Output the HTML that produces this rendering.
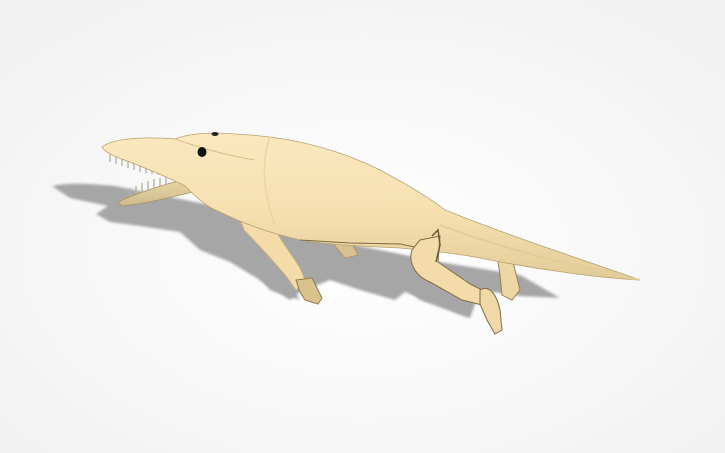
<!DOCTYPE html>
<html><head><style>
html,body{margin:0;padding:0;width:725px;height:453px;overflow:hidden;background:#f8f8f8}
</style></head><body>
<svg width="725" height="453" viewBox="0 0 725 453" xmlns="http://www.w3.org/2000/svg">
<defs>
<radialGradient id="bg" cx="50%" cy="55%" r="70%">
<stop offset="0" stop-color="#ffffff"/><stop offset="1" stop-color="#f1f1f1"/>
</radialGradient>
<linearGradient id="body" x1="0" y1="0" x2="0" y2="1">
<stop offset="0" stop-color="#fbe8bf"/><stop offset="0.55" stop-color="#f6e0b0"/><stop offset="1" stop-color="#e2cb98"/>
</linearGradient>
<linearGradient id="jaw" x1="0" y1="0" x2="0" y2="1">
<stop offset="0" stop-color="#eedaa8"/><stop offset="1" stop-color="#cdb98a"/>
</linearGradient>
<filter id="bl"><feGaussianBlur stdDeviation="1.2"/></filter>
</defs>
<rect width="725" height="453" fill="url(#bg)"/>
<!-- shadow -->
<path filter="url(#bl)" fill="#a6a6a6" d="M52,186 C70,182 95,184 115,186 L210,205 L330,240 L440,262 L520,275 L560,298 L520,296 L480,290 L470,318 L440,305 L405,292 L395,300 L360,290 L330,280 L300,292 L290,300 L260,280 L240,268 L230,262 L200,250 L180,232 L140,226 L110,222 L96,214 L108,206 L70,198 Z"/>
<path filter="url(#bl)" fill="#a6a6a6" d="M235,250 L280,270 L300,300 L270,290 Z M380,268 L430,285 L470,318 L420,300 Z"/>
<!-- lower jaw -->
<path d="M118,202 C140,192 175,180 200,177 L202,190 C175,196 145,204 122,206 Z" fill="url(#jaw)" stroke="#a89464" stroke-width="0.8"/>
<!-- teeth -->
<g stroke="#b9b39f" stroke-width="1.4">
<path d="M110,152v10M116,154v10M122,156v10M128,158v10M134,160v10M140,162v10M146,164v9M152,166v8M158,168v7"/>
<path d="M130,196v-8M136,194v-8M142,192v-9M148,190v-9M154,188v-9M160,186v-8M166,185v-8"/>
</g>
<!-- front leg -->
<path d="M238,214 C250,205 266,210 272,224 C280,240 292,255 300,268 L306,282 L296,290 L286,276 C274,262 256,242 244,230 Z" fill="#f3dcaa" stroke="#c7b07c" stroke-width="0.8"/>
<path d="M296,280 L312,278 L322,298 L318,304 L305,300 L300,292 Z" fill="#dac28c" stroke="#8f7b4e" stroke-width="1"/>
<!-- far legs under body -->
<path d="M330,240 L350,240 L358,255 L345,258 Z" fill="#d8c090" stroke="#a8925f" stroke-width="0.8"/>
<path d="M497,255 L512,258 L520,290 L512,300 L502,295 L500,275 Z" fill="#ecd6a3" stroke="#8d7a4d" stroke-width="0.9"/>
<!-- body -->
<path d="M102,147 C112,139 140,136 175,139 C190,133 210,132 235,134 C280,136 330,145 380,170 C410,186 430,198 445,210 C520,240 590,262 640,280 C600,278 540,270 480,258 C450,252 420,250 400,248 C360,246 330,245 300,240 C265,232 240,222 220,212 C205,206 195,196 185,186 C170,178 150,170 130,162 C115,157 104,152 102,147 Z" fill="url(#body)" stroke="#b8a070" stroke-width="0.8"/>
<path d="M175,139 C200,148 230,156 255,160" fill="none" stroke="#d5bf8e" stroke-width="1"/>
<path d="M270,136 C262,160 262,190 275,225" fill="none" stroke="#ead5a4" stroke-width="1.5"/>
<path d="M300,240 L350,243 L400,244 L430,250" fill="none" stroke="#7d6a42" stroke-width="1"/>
<path d="M440,225 C500,248 580,268 640,280" fill="none" stroke="#e3cc98" stroke-width="2"/>
<!-- rear leg -->
<path d="M420,240 L440,236 L438,262 L470,284 L486,292 L482,305 L462,300 L430,282 C415,276 408,262 412,250 Z" fill="#f3dcaa" stroke="#7f6c44" stroke-width="1"/>
<path d="M432,236 L438,230 L440,245 L436,262" fill="none" stroke="#6b5a36" stroke-width="1.5"/>
<path d="M480,290 C490,284 497,296 500,310 L502,330 L495,334 L487,320 L480,304 Z" fill="#f0d9a6" stroke="#7f6c44" stroke-width="1"/>
<!-- eyes -->
<ellipse cx="202" cy="152" rx="4.5" ry="5" fill="#111"/>
<ellipse cx="215" cy="134" rx="3.5" ry="2" fill="#222"/>
</svg>
</body></html>
